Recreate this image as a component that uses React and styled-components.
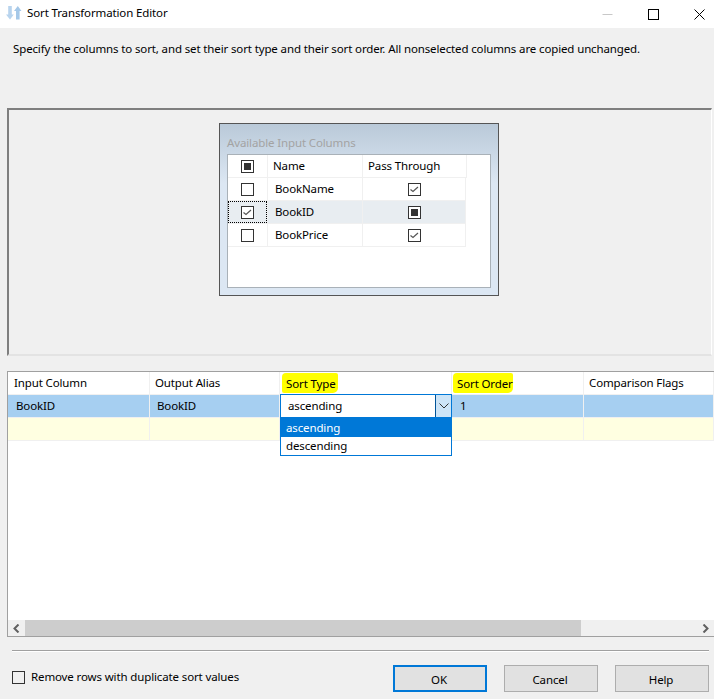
import React from "react";
import styled, { createGlobalStyle } from "styled-components";

const GlobalStyle = createGlobalStyle`
  html, body {
    margin: 0;
    padding: 0;
    background: #f0f0f0;
  }
  * {
    box-sizing: border-box;
  }
  body {
    font-family: "Noto Sans", "Open Sans", "Liberation Sans", sans-serif;
    font-size: 11.5px;
    letter-spacing: -0.13px;
    color: #000;
  }
`;

const Window = styled.div`
  width: 714px;
  height: 699px;
  display: flex;
  flex-direction: column;
  overflow: hidden;
  background: #f0f0f0;
`;

const TitleBar = styled.div`
  height: 28px;
  flex: none;
  display: flex;
  align-items: center;
  background: #fff;
  padding-left: 6px;
  padding-bottom: 3px;
`;

const TitleText = styled.span`
  margin-left: 5px;
  line-height: 16px;
`;

const WindowControls = styled.div`
  margin-left: auto;
  display: flex;
  align-items: center;
  margin-right: 9px;
  margin-top: 3px;
  gap: 35px;
`;

const Description = styled.div`
  height: 80px;
  flex: none;
  padding: 13px 0 0 13px;
  line-height: 16px;
  white-space: nowrap;
`;

const SunkenPanel = styled.div`
  flex: none;
  height: 248px;
  width: 705px;
  margin-left: 7px;
  padding-top: 15px;
  padding-right: 2px;
  display: flex;
  justify-content: center;
  align-items: flex-start;
  background: #f0f0f0;
  border-top: 2px solid #7f7f7f;
  border-left: 2px solid #7f7f7f;
  border-right: 1px solid #fff;
  border-bottom: 2px solid #e3e3e3;
`;

const ColumnsBox = styled.div`
  width: 280px;
  height: 173px;
  margin-top: -2px;
  border: 1px solid #555;
  padding: 1px;
  background-image: linear-gradient(#b9c9d8, #dce7f3 35%, #dce7f3);
  background-origin: border-box;
  display: flex;
  flex-direction: column;
`;

const BoxCaption = styled.div`
  height: 28px;
  padding: 10px 0 0 6px;
  color: #a3a3a3;
  line-height: 16px;
  white-space: nowrap;
  flex: none;
`;

const ColumnsGrid = styled.div`
  margin: 1px 6px 0;
  height: 134px;
  background: #fff;
  border: 1px solid #a9b1b8;
`;

const ColumnsRow = styled.div`
  display: grid;
  grid-template-columns: 40px 95px ${(props) => (props.$header ? 104 : 103)}px;
  width: max-content;
  height: 23px;
  background: ${(props) => (props.$selected ? "#e8edf1" : "#fff")};
`;

const ColumnsCell = styled.div`
  display: flex;
  align-items: center;
  justify-content: ${(props) => (props.$center ? "center" : "flex-start")};
  padding-left: ${(props) => props.$pad || 0}px;
  border-right: 1px solid #f0f0f0;
  border-bottom: 1px solid #f0f0f0;
  position: relative;
  line-height: 16px;
`;

const FocusRing = styled.div`
  position: absolute;
  inset: 0 0 0 0;
  border: 1px dotted #000;
`;

const CheckBoxFrame = styled.div`
  width: 13px;
  height: 13px;
  flex: none;
  display: flex;
  align-items: center;
  justify-content: center;
  border: 1px solid #333;
  background: ${(props) => (props.$plain ? "transparent" : "#fff")};
`;

const Indeterminate = styled.div`
  width: 7px;
  height: 7px;
  background: #333;
`;

const Grid = styled.div`
  flex: none;
  position: relative;
  width: 707px;
  height: 266px;
  margin: 15px 0 0 7px;
  background: #fff;
  border-top: 1px solid #a0a0a0;
  border-left: 1px solid #a0a0a0;
  border-bottom: 1px solid #a0a0a0;
  display: flex;
  flex-direction: column;
`;

const GridRow = styled.div`
  display: grid;
  grid-template-columns: 142px 130px 172px 132px 130px;
  height: 23px;
  flex: none;
  background: ${(props) => props.$bg || "#fff"};
`;

const GridCell = styled.div`
  display: flex;
  align-items: center;
  padding-left: ${(props) => props.$pad || 7}px;
  border-right: 1px solid #f0f0f0;
  border-bottom: 1px solid #f0f0f0;
  line-height: 16px;
  white-space: nowrap;
`;

const Marker = styled.span`
  background: #ffff00;
  padding: 3px ${(props) => props.$tail}px 1px 4px;
  margin-left: -4px;
  margin-top: -1px;
  border-radius: 4px 2px 5px 2px;
`;

const GridBody = styled.div`
  flex: 1;
`;

const HScrollBar = styled.div`
  flex: none;
  height: 16px;
  display: flex;
  background: #f0f0f0;
`;

const ScrollButton = styled.div`
  width: 17px;
  flex: none;
  display: flex;
  align-items: center;
  justify-content: center;
`;

const ScrollThumb = styled.div`
  width: 556px;
  flex: none;
  background: #cdcdcd;
`;

const ScrollTrack = styled.div`
  flex: 1;
`;

const ComboEditor = styled.div`
  position: absolute;
  left: 272px;
  top: 22px;
  width: 172px;
  height: 24px;
  display: flex;
  background: #fff;
  border: 1px solid #0078d7;
`;

const ComboText = styled.div`
  flex: 1;
  padding-left: 7px;
  display: flex;
  align-items: center;
  line-height: 16px;
`;

const ComboArrow = styled.div`
  width: 16px;
  flex: none;
  display: flex;
  align-items: center;
  justify-content: center;
  background: #cce4f7;
  border-left: 1px solid #005499;
`;

const ComboList = styled.div`
  position: absolute;
  left: 272px;
  top: 45px;
  width: 172px;
  height: 39px;
  background: #fff;
  border: 1px solid #0078d7;
  border-top: none;
`;

const ComboItem = styled.div`
  height: ${(props) => (props.$active ? 20 : 18)}px;
  padding-left: 5px;
  padding-top: ${(props) => (props.$active ? 2 : 0)}px;
  display: flex;
  align-items: center;
  line-height: 16px;
  color: ${(props) => (props.$active ? "#fff" : "#000")};
  background: ${(props) => (props.$active ? "#0078d7" : "transparent")};
`;

const Divider = styled.div`
  flex: none;
  width: 697px;
  height: 2px;
  margin: 13px 0 0 12px;
  background: #a0a0a0;
  border-bottom: 1px solid #fff;
`;

const Footer = styled.div`
  flex: 1;
  display: flex;
  align-items: flex-start;
  padding: 13px 5px 0 12px;
`;

const RemoveOption = styled.label`
  display: flex;
  align-items: center;
  gap: 6px;
  margin-top: 4px;
  line-height: 16px;
`;

const Buttons = styled.div`
  margin-left: auto;
  display: flex;
  gap: 17px;
`;

const Button = styled.button`
  width: 94px;
  height: 27px;
  padding: 1px 2px 0 0;
  font: inherit;
  letter-spacing: inherit;
  color: #000;
  background: #e1e1e1;
  border: ${(props) => (props.$primary ? "2px solid #0078d7" : "1px solid #adadad")};
`;

const SortIcon = () => (
  <svg width="16" height="16" viewBox="0 0 16 16">
    <path d="M2.2 1h3.6v8.5h2L4 14.5 0 9.5h2.2z" fill="#b8d4ee" />
    <path d="M10 14.5h3.6V6h1.9L11.8 1 8 6h2z" fill="#a5c8e8" />
  </svg>
);

const Minimize = () => (
  <svg width="11" height="11" viewBox="0 0 11 11">
    <path d="M0.5 5.5h10" stroke="#c8c8c8" fill="none" />
  </svg>
);

const Maximize = () => (
  <svg width="11" height="11" viewBox="0 0 11 11">
    <rect x="0.5" y="0.5" width="10" height="10" stroke="#000" fill="none" />
  </svg>
);

const Close = () => (
  <svg width="11" height="11" viewBox="0 0 11 11">
    <path d="M0.5 0.5l10 10M10.5 0.5l-10 10" stroke="#000" fill="none" />
  </svg>
);

const Tick = () => (
  <svg width="11" height="11" viewBox="0 0 11 11">
    <path d="M1.5 5.5l2.5 2 5-4.5" stroke="#555" strokeWidth="1.2" fill="none" />
  </svg>
);

const ChevronDown = () => (
  <svg width="10" height="6" viewBox="0 0 10 6">
    <path d="M0.5 0.5l4.5 4.5 4.5-4.5" stroke="#333" fill="none" />
  </svg>
);

const ScrollArrow = ({ flip }) => (
  <svg width="7" height="9" viewBox="0 0 7 9">
    <path
      d={flip ? "M1.5 0.5l4 4-4 4" : "M5.5 0.5l-4 4 4 4"}
      stroke="#606060"
      strokeWidth="2"
      fill="none"
    />
  </svg>
);

const Check = ({ state }) => (
  <CheckBoxFrame>
    {state === "checked" && <Tick />}
    {state === "mixed" && <Indeterminate />}
  </CheckBoxFrame>
);

const inputColumns = [
  { name: "BookName", selected: "empty", pass: "checked" },
  { name: "BookID", selected: "checked", pass: "mixed", current: true },
  { name: "BookPrice", selected: "empty", pass: "checked" },
];

export default function App() {
  return (
    <Window>
      <GlobalStyle />
      <TitleBar>
        <SortIcon />
        <TitleText>Sort Transformation Editor</TitleText>
        <WindowControls>
          <Minimize />
          <Maximize />
          <Close />
        </WindowControls>
      </TitleBar>
      <Description>
        Specify the columns to sort, and set their sort type and their sort order. All nonselected columns are copied unchanged.
      </Description>
      <SunkenPanel>
        <ColumnsBox>
          <BoxCaption>Available Input Columns</BoxCaption>
          <ColumnsGrid>
            <ColumnsRow $header>
              <ColumnsCell $center>
                <Check state="mixed" />
              </ColumnsCell>
              <ColumnsCell $pad={5}>Name</ColumnsCell>
              <ColumnsCell $pad={5}>Pass Through</ColumnsCell>
            </ColumnsRow>
            {inputColumns.map((col) => (
              <ColumnsRow key={col.name} $selected={col.current}>
                <ColumnsCell $center>
                  {col.current && <FocusRing />}
                  <Check state={col.selected} />
                </ColumnsCell>
                <ColumnsCell $pad={7}>{col.name}</ColumnsCell>
                <ColumnsCell $center>
                  <Check state={col.pass} />
                </ColumnsCell>
              </ColumnsRow>
            ))}
          </ColumnsGrid>
        </ColumnsBox>
      </SunkenPanel>
      <Grid>
        <GridRow>
          <GridCell $pad={6}>Input Column</GridCell>
          <GridCell $pad={5}>Output Alias</GridCell>
          <GridCell $pad={6}>
            <Marker $tail={2}>Sort Type</Marker>
          </GridCell>
          <GridCell $pad={5}>
            <Marker $tail={0}>Sort Order</Marker>
          </GridCell>
          <GridCell $pad={5}>Comparison Flags</GridCell>
        </GridRow>
        <GridRow $bg="#a6cff1">
          <GridCell $pad={8}>BookID</GridCell>
          <GridCell>BookID</GridCell>
          <GridCell />
          <GridCell $pad={8}>1</GridCell>
          <GridCell />
        </GridRow>
        <GridRow $bg="#ffffe1">
          <GridCell />
          <GridCell />
          <GridCell />
          <GridCell />
          <GridCell />
        </GridRow>
        <GridBody />
        <HScrollBar>
          <ScrollButton>
            <ScrollArrow />
          </ScrollButton>
          <ScrollThumb />
          <ScrollTrack />
          <ScrollButton>
            <ScrollArrow flip />
          </ScrollButton>
        </HScrollBar>
        <ComboEditor>
          <ComboText>ascending</ComboText>
          <ComboArrow>
            <ChevronDown />
          </ComboArrow>
        </ComboEditor>
        <ComboList>
          <ComboItem $active>ascending</ComboItem>
          <ComboItem>descending</ComboItem>
        </ComboList>
      </Grid>
      <Divider />
      <Footer>
        <RemoveOption>
          <CheckBoxFrame $plain />
          Remove rows with duplicate sort values
        </RemoveOption>
        <Buttons>
          <Button $primary>OK</Button>
          <Button>Cancel</Button>
          <Button>Help</Button>
        </Buttons>
      </Footer>
    </Window>
  );
}
